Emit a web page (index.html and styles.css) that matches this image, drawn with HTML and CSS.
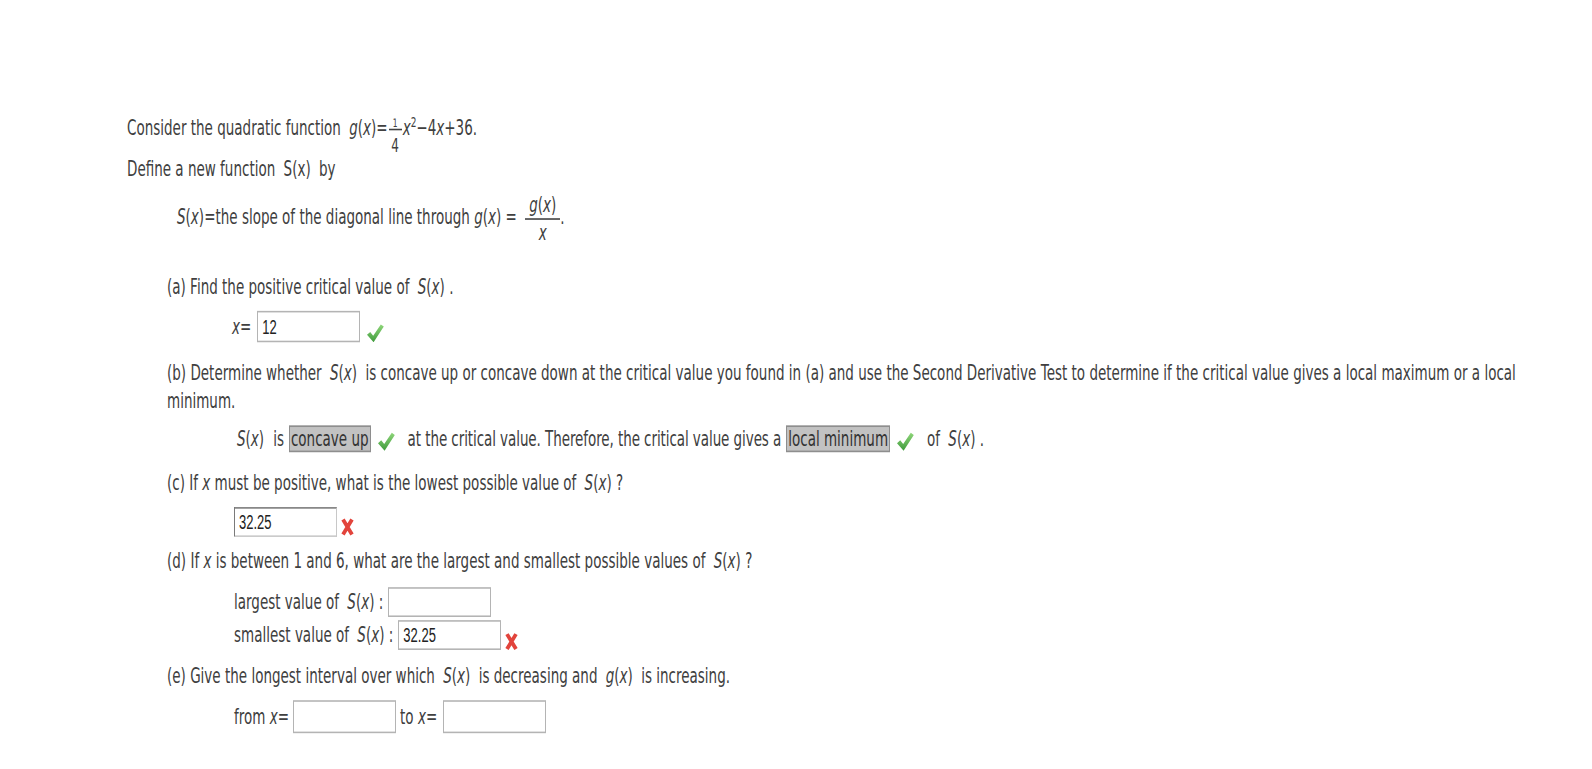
FILE: index.html
```html
<!DOCTYPE html>
<html>
<head>
<meta charset="utf-8">
<title>Quadratic function</title>
<link rel="stylesheet" href="styles.css">
</head>
<body>
<div class="page">
  <div class="row lead r1">Consider the quadratic function <span class="m ml"><i>g</i>(<i>x</i>)=<span class="frac1"><span class="n">1</span><span class="d">4</span></span><i>x</i><sup>2</sup>−4<i>x</i>+36</span>.</div>
  <div class="row lead r2">Define a new function <span class="up">S(x)</span> by</div>
  <div class="row disp r3"><span class="m"><i>S</i>(<i>x</i>)</span>=the slope of the diagonal line through <span class="m"><i>g</i>(<i>x</i>)</span> = <span class="frac2"><span class="n"><i>g</i>(<i>x</i>)</span><span class="d"><i>x</i></span></span>.</div>

  <div class="row q ra">(a) Find the positive critical value of <span class="m ml"><i>S</i>(<i>x</i>)</span> .</div>
  <div class="irow xrow"><span class="lbl lx"><i>x</i>=</span><input class="box" type="text" value="12"><svg class="ck" viewBox="0 0 18 20" preserveAspectRatio="none"><defs><linearGradient id="g1" x1="0" y1="0" x2="0" y2="1"><stop offset="0" stop-color="#8fd67a"/><stop offset="1" stop-color="#3f9b3c"/></linearGradient></defs><path d="M1 11.5 L4.2 8.6 L7.2 12.4 L14.8 1 L17.8 3.2 L7.6 19 Z" fill="url(#g1)"/></svg></div>

  <div class="row q rb">(b) Determine whether <span class="m mx"><i>S</i>(<i>x</i>)</span> is concave up or concave down at the critical value you found in (a) and use the Second Derivative Test to determine if the critical value gives a local maximum or a local<br>minimum.</div>
  <div class="irow srow"><span class="m"><i>S</i>(<i>x</i>)</span><span class="is">is</span><span class="sel">concave up</span><svg class="ck ck2" viewBox="0 0 18 20" preserveAspectRatio="none"><path d="M1 11.5 L4.2 8.6 L7.2 12.4 L14.8 1 L17.8 3.2 L7.6 19 Z" fill="url(#g1)"/></svg><span class="t1">at the critical value. Therefore, the critical value gives a</span><span class="sel">local minimum</span><svg class="ck ck2" viewBox="0 0 18 20" preserveAspectRatio="none"><path d="M1 11.5 L4.2 8.6 L7.2 12.4 L14.8 1 L17.8 3.2 L7.6 19 Z" fill="url(#g1)"/></svg><span class="t2">of <span class="m ml"><i>S</i>(<i>x</i>)</span> .</span></div>

  <div class="row q rc">(c) If <i>x</i> must be positive, what is the lowest possible value of <span class="m ml"><i>S</i>(<i>x</i>)</span> ?</div>
  <div class="irow sub crow"><input class="box focus" type="text" value="32.25"><svg class="xx" viewBox="0 0 15 20" preserveAspectRatio="none"><path d="M3 3 L12 18 M12 3 L3 18" stroke="#e2443c" stroke-width="3.8" fill="none"/></svg></div>

  <div class="row q rd">(d) If <i>x</i> is between 1 and 6, what are the largest and smallest possible values of <span class="m ml"><i>S</i>(<i>x</i>)</span> ?</div>
  <div class="irow sub lrow"><span class="lbl">largest value of <span class="m ml"><i>S</i>(<i>x</i>)</span> :</span><input class="box" type="text" value=""></div>
  <div class="irow sub smrow"><span class="lbl">smallest value of <span class="m ml"><i>S</i>(<i>x</i>)</span> :</span><input class="box" type="text" value="32.25"><svg class="xx" viewBox="0 0 15 20" preserveAspectRatio="none"><path d="M3 3 L12 18 M12 3 L3 18" stroke="#e2443c" stroke-width="3.8" fill="none"/></svg></div>

  <div class="row q re">(e) Give the longest interval over which <span class="m mx"><i>S</i>(<i>x</i>)</span> is decreasing and <span class="m mx"><i>g</i>(<i>x</i>)</span> is increasing.</div>
  <div class="irow sub frow"><span class="lbl lf">from <i>x</i>=</span><input class="box" type="text" value=""><span class="lbl to">to <i>x</i>=</span><input class="box" type="text" value=""></div>
</div>
</body>
</html>
```

FILE: styles.css
```css
html, body {
  min-height: 769px;
}

body {
  margin: 0;
  background: #ffffff;
}

.page {
  transform: scaleY(1.57);
  transform-origin: 0 0;
  font-family: "DejaVu Sans", Verdana, sans-serif;
  font-size: 13.5px;
  color: #404040;
  padding-top: 73.3px;
  display: flex;
  flex-direction: column;
  align-items: flex-start;
}

.row {
  white-space: nowrap;
  line-height: 17px;
}

.lead { margin-left: 127px; }
.disp { margin-left: 177px; }
.q { margin-left: 167px; }
.sub { margin-left: 234px; }

.m i { font-style: italic; }
.ml { margin-left: 4px; }
.mx { margin: 0 4px; }
.up { margin: 0 4px; }

sup {
  font-size: 9px;
  line-height: 0;
  vertical-align: 5px;
}

.frac1 {
  display: inline-flex;
  flex-direction: column;
  align-items: center;
  vertical-align: 5px;
  min-width: 13px;
  margin: 0 1px;
}
.frac1 .n {
  font-size: 7.5px;
  line-height: 6px;
  border-bottom: 1px solid currentColor;
  align-self: stretch;
  text-align: center;
}
.frac1 .d {
  font-size: 12px;
  line-height: 10px;
  padding-top: 5px;
}

.frac2 {
  display: inline-flex;
  flex-direction: column;
  align-items: center;
  vertical-align: 7.9px;
  margin-left: 4px;
}
.frac2 .n {
  line-height: 12px;
  padding: 0 4px 3px;
  border-bottom: 1px solid currentColor;
}
.frac2 .d {
  line-height: 12px;
  padding-top: 2.4px;
}

.r1 { height: 24.7px; }
.r2 { margin-top: 1px; }
.r3 { margin-top: 8px; height: 30px; }
.ra { margin-top: 20px; }

.irow {
  display: flex;
  align-items: center;
  white-space: nowrap;
  line-height: 17px;
}

.xrow { margin-top: 7.5px; height: 20px; margin-left: 232px; }
.rb { margin-top: 9.3px; line-height: 18px; }
.srow { margin-top: 7.4px; height: 17.2px; margin-left: 237px; }
.rc { margin-top: 10.5px; }
.crow { margin-top: 6.8px; height: 19.2px; }
.rd { margin-top: 7.3px; }
.lrow { margin-top: 7.6px; height: 19.7px; }
.smrow { margin-top: 1.7px; height: 19.2px; }
.re { margin-top: 8.1px; }
.frow { margin-top: 6.9px; height: 20.5px; }

.lbl { margin-right: 5px; }
.lx { margin-right: 6px; }
.lf { margin-right: 4px; }
.to { margin-left: 4px; margin-right: 6px; }

.box {
  box-sizing: border-box;
  width: 103px;
  height: 100%;
  margin: 0;
  padding: 0 4px;
  border: 1px solid #b4b4b4;
  background: #ffffff;
  font-family: "Liberation Sans", Arial, sans-serif;
  font-size: 13px;
  color: #222222;
  outline: none;
}
.box.focus {
  border-color: #7a7a7a #c8c8c8 #c8c8c8 #7a7a7a;
}

.ck {
  width: 18px;
  height: 12.7px;
  margin-left: 6px;
  align-self: flex-end;
}
.ck2 {
  align-self: center;
  margin-top: 3px;
}

.xx {
  width: 15px;
  height: 12.7px;
  margin-left: 3px;
  align-self: flex-end;
}

.is { margin-left: 9px; }

.sel {
  box-sizing: border-box;
  height: 100%;
  margin-left: 5px;
  padding: 0 1px;
  line-height: 15px;
  background: #c2c2c2;
  border: 1px solid #8e8e8e;
  color: #333333;
}

.t1 {
  margin-left: 13px;
  letter-spacing: -0.08px;
}
.t2 { margin-left: 13px; }
```
